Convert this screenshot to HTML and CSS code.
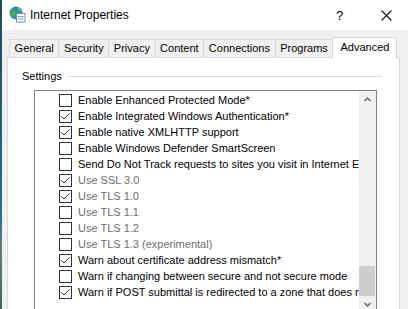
FILE: index.html
```html
<!DOCTYPE html>
<html lang="en">

<head>
    <meta charset="UTF-8" />
    <title>Internet Properties</title>
    <link rel="stylesheet" href="styles.css">
</head>

<body>
    <div class="desktop-edge"></div>

    <div class="window">
        <!-- title bar -->
        <div class="titlebar">
            <svg class="app-icon" width="17" height="17" viewBox="0 0 17 17">
                <circle cx="7" cy="7" r="6.5" fill="#2f86c9" />
                <path d="M2 5 C4 3 6 4 7 6 C8 8 6 9 5 11 C4 12 2 10 1.5 8 Z" fill="#4caf3c" />
                <path d="M8 1.5 C10 2 12 3 12.5 5 C11 6 9 5 8 3 Z" fill="#5cbf45" />
                <rect x="7.5" y="7.5" width="8.5" height="8.5" fill="#fff" stroke="#6a8fb5" />
                <rect x="9" y="10" width="1.5" height="1" fill="#3d7ad1" />
                <rect x="11" y="10" width="3.5" height="1" fill="#7a99bb" />
                <rect x="9" y="12.5" width="1.5" height="1" fill="#3d7ad1" />
                <rect x="11" y="12.5" width="3.5" height="1" fill="#7a99bb" />
            </svg>
            <span class="title">Internet Properties</span>
            <span class="help">?</span>
            <svg class="close" width="11" height="11" viewBox="0 0 11 11">
                <path d="M0.5 0.5 L10.5 10.5 M10.5 0.5 L0.5 10.5" stroke="#111" stroke-width="1.1" />
            </svg>
        </div>

        <div class="dialog">
            <div class="tabs">
                <div class="tab">General</div>
                <div class="tab">Security</div>
                <div class="tab">Privacy</div>
                <div class="tab">Content</div>
                <div class="tab">Connections</div>
                <div class="tab">Programs</div>
                <div class="tab active">Advanced</div>
            </div>

            <div class="page">
                <div class="group-head">
                    <span>Settings</span>
                    <div class="group-line"></div>
                </div>

                <div class="listbox">
                    <div class="items">
                        <div class="item"><span class="box"></span>Enable Enhanced Protected Mode*</div>
                        <div class="item"><span class="box checked"></span>Enable Integrated Windows Authentication*</div>
                        <div class="item"><span class="box checked"></span>Enable native XMLHTTP support</div>
                        <div class="item"><span class="box"></span>Enable Windows Defender SmartScreen</div>
                        <div class="item"><span class="box"></span>Send Do Not Track requests to sites you visit in Internet Explorer</div>
                        <div class="item disabled"><span class="box checked"></span>Use SSL 3.0</div>
                        <div class="item disabled"><span class="box checked"></span>Use TLS 1.0</div>
                        <div class="item disabled"><span class="box"></span>Use TLS 1.1</div>
                        <div class="item disabled"><span class="box"></span>Use TLS 1.2</div>
                        <div class="item disabled"><span class="box"></span>Use TLS 1.3 (experimental)</div>
                        <div class="item"><span class="box checked"></span>Warn about certificate address mismatch*</div>
                        <div class="item"><span class="box"></span>Warn if changing between secure and not secure mode</div>
                        <div class="item"><span class="box checked"></span>Warn if POST submittal is redirected to a zone that does not permit posts</div>
                    </div>

                    <div class="scrollbar">
                        <svg class="arrow" width="17" height="17" viewBox="0 0 17 17">
                            <path d="M5.5 10 L8.5 7 L11.5 10" fill="none" stroke="#606060" stroke-width="1.4" />
                        </svg>
                        <div class="track">
                            <div class="thumb"></div>
                        </div>
                        <svg class="arrow" width="17" height="17" viewBox="0 0 17 17">
                            <path d="M5.5 7 L8.5 10 L11.5 7" fill="none" stroke="#606060" stroke-width="1.4" />
                        </svg>
                    </div>
                </div>
            </div>
        </div>
    </div>
</body>

</html>
```

FILE: styles.css
```css
body {
    margin: 0;
    width: 408px;
    height: 309px;
    overflow: hidden;
    display: flex;
    font-family: 'Liberation Sans', Arial, sans-serif;
    font-size: 11px;
    color: #000;
    background: #f0f0f0;
}

.desktop-edge {
    width: 2px;
    flex-shrink: 0;
    background: linear-gradient(#1d4b5a 0, #23607a 40%, #2a6f96 70%, #6b7a78 80%, #3f6a4c 100%);
}

.window {
    flex: 1;
    min-width: 0;
    display: flex;
    flex-direction: column;
    background: #f0f0f0;
}

/* title bar */
.titlebar {
    height: 30px;
    flex-shrink: 0;
    background: #fff;
    display: flex;
    align-items: center;
}

.app-icon {
    margin-left: 7px;
    margin-top: -1px;
}

.title {
    margin-left: 4px;
    font-size: 12px;
    flex: 1;
}

.help {
    font-size: 13px;
    width: 8px;
    margin-right: 37px;
}

.close {
    margin-right: 16px;
}

/* tabs */
.dialog {
    flex: 1;
    padding: 7px 8px 0 5px;
    display: flex;
    flex-direction: column;
}

.tabs {
    display: flex;
    align-items: flex-end;
    height: 20px;
    padding-left: 2px;
    position: relative;
    z-index: 1;
}

.tab {
    height: 17px;
    line-height: 17px;
    padding: 0 4.6px;
    border: 1px solid #d9d9d9;
    border-bottom: none;
    border-right: none;
    background: #f0f0f0;
}

.tab.active {
    height: 21px;
    line-height: 18px;
    background: #fff;
    border-right: 1px solid #d9d9d9;
    padding: 0 7px;
    margin-bottom: -2px;
}

.page {
    flex: 1;
    background: #fff;
    border: 1px solid #d9d9d9;
    border-bottom: none;
    padding: 10px 0 0 14px;
    display: flex;
    flex-direction: column;
}

.group-head {
    display: flex;
    align-items: center;
    height: 16px;
    margin-right: 17px;
}

.group-line {
    flex: 1;
    height: 1px;
    background: #dcdcdc;
    margin-left: 6px;
}

/* list */
.listbox {
    height: 222px;
    flex-shrink: 0;
    margin: 6px 22px 0 12px;
    border: 1px solid #828282;
    display: flex;
    overflow: hidden;
}

.items {
    flex: 1;
    min-width: 0;
    overflow: hidden;
    padding-top: 1px;
}

.item {
    height: 16px;
    display: flex;
    align-items: center;
    white-space: nowrap;
    padding-left: 24px;
}

.item.disabled {
    color: #6d6d6d;
}

.box {
    width: 11px;
    height: 11px;
    border: 1px solid #333;
    flex-shrink: 0;
    margin-right: 6px;
    background: #fff;
}

.box.checked {
    background: #fff url("data:image/svg+xml;utf8,<svg xmlns='http://www.w3.org/2000/svg' width='11' height='11'><path d='M1.5 5.5 L4 8 L9.5 2.5' fill='none' stroke='%23333' stroke-width='1'/></svg>") no-repeat center;
}

.scrollbar {
    width: 17px;
    flex-shrink: 0;
    background: #f0f0f0;
    display: flex;
    flex-direction: column;
}

.track {
    flex: 1;
    display: flex;
    flex-direction: column;
    justify-content: flex-end;
}

.thumb {
    height: 30px;
    margin: 0 1px 0 0;
    background: #cdcdcd;
}
```
